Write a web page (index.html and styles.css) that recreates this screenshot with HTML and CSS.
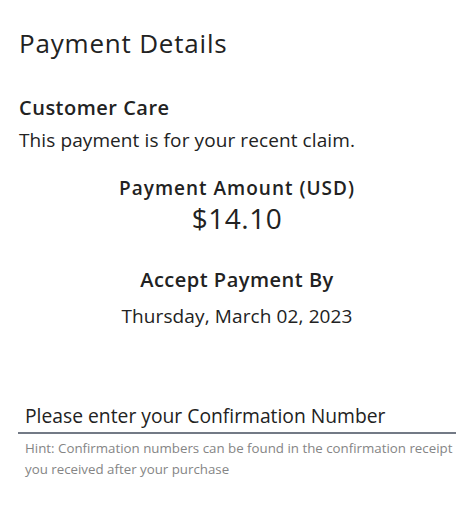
FILE: index.html
```html
<!DOCTYPE html>
<html>
<head>
<meta charset="utf-8">
<link rel="stylesheet" href="styles.css">
</head>
<body>
<main class="page">
  <h1 class="title">Payment Details</h1>
  <section class="intro">
    <h2 class="sub">Customer Care</h2>
    <p class="desc">This payment is for your recent claim.</p>
  </section>
  <section class="amount">
    <div class="label">Payment Amount (USD)</div>
    <div class="value">$14.10</div>
  </section>
  <section class="accept">
    <div class="label label-lg">Accept Payment By</div>
    <div class="date">Thursday, March 02, 2023</div>
  </section>
  <section class="field">
    <div class="input">Please enter your Confirmation Number</div>
    <p class="hint">Hint: Confirmation numbers can be found in the confirmation receipt you received after your purchase</p>
  </section>
</main>
</body>
</html>
```
FILE: styles.css
```css
* { box-sizing: border-box; }
html, body { margin: 0; padding: 0; background: #fff; }
body {
  font-family: "Open Sans", "Noto Sans", sans-serif;
  color: #222;
}
.page {
  padding: 27px 18px 0 18px;
  display: flex;
  flex-direction: column;
}
.title {
  margin: 0 0 0 1px;
  font-size: 26px;
  line-height: 32px;
  font-weight: 400;
  letter-spacing: 0.8px;
}
.intro { margin-top: 35px; padding-left: 1px; }
.sub {
  margin: 0;
  font-size: 20px;
  line-height: 28px;
  font-weight: 600;
  letter-spacing: 0.5px;
}
.desc {
  margin: 4px 0 0;
  font-size: 19px;
  line-height: 28px;
  letter-spacing: 0.1px;
}
.amount, .accept {
  display: flex;
  flex-direction: column;
  align-items: center;
}
.amount { margin-top: 20px; }
.label {
  font-size: 19px;
  line-height: 28px;
  font-weight: 600;
  letter-spacing: 1px;
}
.label-lg { font-size: 20px; letter-spacing: 0.5px; }
.value {
  margin-top: -2px;
  font-size: 28px;
  line-height: 36px;
  letter-spacing: 0.5px;
}
.accept { margin-top: 30px; }
.date {
  margin-top: 8px;
  font-size: 19px;
  line-height: 28px;
  letter-spacing: 0.12px;
}
.field { margin-top: 72px; }
.input {
  padding: 0 0 2px 7px;
  font-size: 19.3px;
  line-height: 28px;
  border-bottom: 2px solid #737a86;
}
.hint {
  margin: 4px 0 0;
  padding-left: 7px;
  font-size: 13.3px;
  line-height: 21px;
  color: #858585;
}
```
